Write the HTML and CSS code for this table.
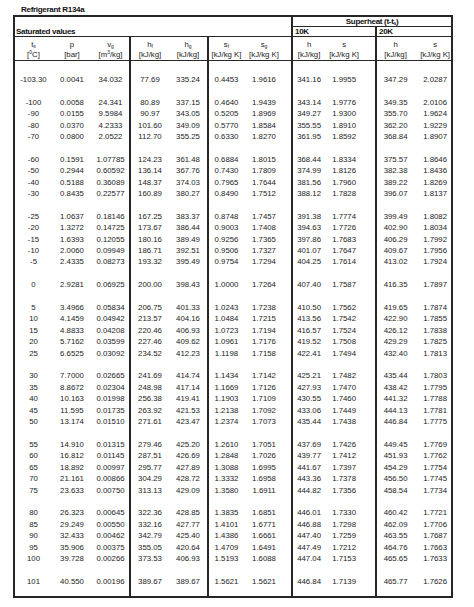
FILE: index.html
```html
<!DOCTYPE html>
<html lang="en">
<head>
<meta charset="utf-8">
<title>Refrigerant R134a</title>
<link rel="stylesheet" href="styles.css">
</head>
<body>
<div class="title">Refrigerant R134a</div>
<table class="tbl">
<colgroup>
<col class="w37"><col class="w40"><col class="w37"><col class="w40"><col class="w38"><col class="w37"><col class="w47"><col class="w34"><col class="w50"><col class="w39"><col class="w37">
</colgroup>
<thead>
<tr class="r1"><th class="sat" colspan="7" rowspan="2">Saturated values</th><th class="sh" colspan="4">Superheat (t-t<sub>s</sub>)</th></tr>
<tr class="r2"><th class="k" colspan="2">10K</th><th class="k k2" colspan="2">20K</th></tr>
<tr class="r3">
<th>t<sub>s</sub><br>[<sup>0</sup>C]</th>
<th>p<br>[bar]</th>
<th>v<sub>g</sub><br>[m<sup>3</sup>/kg]</th>
<th>h<sub>f</sub><br>[kJ/kg]</th>
<th>h<sub>g</sub><br>[kJ/kg]</th>
<th>s<sub>f</sub><br>[kJ/kg K]</th>
<th class="pr7">s<sub>g</sub><br>[kJ/kg K]</th>
<th>h<br>[kJ/kg]</th>
<th class="pr12">s<br>[kJ/kg K]</th>
<th>h<br>[kJ/kg]</th>
<th class="pl5">s<br>[kJ/kg K]</th>
</tr>
</thead>
<tbody>
<tr class="top"><td></td><td></td><td></td><td></td><td></td><td></td><td></td><td></td><td></td><td></td><td></td></tr>
<tr><td>-103.30</td><td>0.0041</td><td>34.032</td><td>77.69</td><td>335.24</td><td>0.4453</td><td>1.9616</td><td>341.16</td><td>1.9955</td><td>347.29</td><td>2.0287</td></tr>
<tr><td></td><td></td><td></td><td></td><td></td><td></td><td></td><td></td><td></td><td></td><td></td></tr>
<tr><td>-100</td><td>0.0058</td><td>24.341</td><td>80.89</td><td>337.15</td><td>0.4640</td><td>1.9439</td><td>343.14</td><td>1.9776</td><td>349.35</td><td>2.0106</td></tr>
<tr><td>-90</td><td>0.0155</td><td>9.5984</td><td>90.97</td><td>343.05</td><td>0.5205</td><td>1.8969</td><td>349.27</td><td>1.9300</td><td>355.70</td><td>1.9624</td></tr>
<tr><td>-80</td><td>0.0370</td><td>4.2333</td><td>101.60</td><td>349.09</td><td>0.5770</td><td>1.8584</td><td>355.55</td><td>1.8910</td><td>362.20</td><td>1.9229</td></tr>
<tr><td>-70</td><td>0.0800</td><td>2.0522</td><td>112.70</td><td>355.25</td><td>0.6330</td><td>1.8270</td><td>361.95</td><td>1.8592</td><td>368.84</td><td>1.8907</td></tr>
<tr><td></td><td></td><td></td><td></td><td></td><td></td><td></td><td></td><td></td><td></td><td></td></tr>
<tr><td>-60</td><td>0.1591</td><td>1.07785</td><td>124.23</td><td>361.48</td><td>0.6884</td><td>1.8015</td><td>368.44</td><td>1.8334</td><td>375.57</td><td>1.8646</td></tr>
<tr><td>-50</td><td>0.2944</td><td>0.60592</td><td>136.14</td><td>367.76</td><td>0.7430</td><td>1.7809</td><td>374.99</td><td>1.8126</td><td>382.38</td><td>1.8436</td></tr>
<tr><td>-40</td><td>0.5188</td><td>0.36089</td><td>148.37</td><td>374.03</td><td>0.7965</td><td>1.7644</td><td>381.56</td><td>1.7960</td><td>389.22</td><td>1.8269</td></tr>
<tr><td>-30</td><td>0.8435</td><td>0.22577</td><td>160.89</td><td>380.27</td><td>0.8490</td><td>1.7512</td><td>388.12</td><td>1.7828</td><td>396.07</td><td>1.8137</td></tr>
<tr><td></td><td></td><td></td><td></td><td></td><td></td><td></td><td></td><td></td><td></td><td></td></tr>
<tr><td>-25</td><td>1.0637</td><td>0.18146</td><td>167.25</td><td>383.37</td><td>0.8748</td><td>1.7457</td><td>391.38</td><td>1.7774</td><td>399.49</td><td>1.8082</td></tr>
<tr><td>-20</td><td>1.3272</td><td>0.14725</td><td>173.67</td><td>386.44</td><td>0.9003</td><td>1.7408</td><td>394.63</td><td>1.7726</td><td>402.90</td><td>1.8034</td></tr>
<tr><td>-15</td><td>1.6393</td><td>0.12055</td><td>180.16</td><td>389.49</td><td>0.9256</td><td>1.7365</td><td>397.86</td><td>1.7683</td><td>406.29</td><td>1.7992</td></tr>
<tr><td>-10</td><td>2.0060</td><td>0.09949</td><td>186.71</td><td>392.51</td><td>0.9506</td><td>1.7327</td><td>401.07</td><td>1.7647</td><td>409.67</td><td>1.7956</td></tr>
<tr><td>-5</td><td>2.4335</td><td>0.08273</td><td>193.32</td><td>395.49</td><td>0.9754</td><td>1.7294</td><td>404.25</td><td>1.7614</td><td>413.02</td><td>1.7924</td></tr>
<tr><td></td><td></td><td></td><td></td><td></td><td></td><td></td><td></td><td></td><td></td><td></td></tr>
<tr><td>0</td><td>2.9281</td><td>0.06925</td><td>200.00</td><td>398.43</td><td>1.0000</td><td>1.7264</td><td>407.40</td><td>1.7587</td><td>416.35</td><td>1.7897</td></tr>
<tr><td></td><td></td><td></td><td></td><td></td><td></td><td></td><td></td><td></td><td></td><td></td></tr>
<tr><td>5</td><td>3.4966</td><td>0.05834</td><td>206.75</td><td>401.33</td><td>1.0243</td><td>1.7238</td><td>410.50</td><td>1.7562</td><td>419.65</td><td>1.7874</td></tr>
<tr><td>10</td><td>4.1459</td><td>0.04942</td><td>213.57</td><td>404.16</td><td>1.0484</td><td>1.7215</td><td>413.56</td><td>1.7542</td><td>422.90</td><td>1.7855</td></tr>
<tr><td>15</td><td>4.8833</td><td>0.04208</td><td>220.46</td><td>406.93</td><td>1.0723</td><td>1.7194</td><td>416.57</td><td>1.7524</td><td>426.12</td><td>1.7838</td></tr>
<tr><td>20</td><td>5.7162</td><td>0.03599</td><td>227.46</td><td>409.62</td><td>1.0961</td><td>1.7176</td><td>419.52</td><td>1.7508</td><td>429.29</td><td>1.7825</td></tr>
<tr><td>25</td><td>6.6525</td><td>0.03092</td><td>234.52</td><td>412.23</td><td>1.1198</td><td>1.7158</td><td>422.41</td><td>1.7494</td><td>432.40</td><td>1.7813</td></tr>
<tr><td></td><td></td><td></td><td></td><td></td><td></td><td></td><td></td><td></td><td></td><td></td></tr>
<tr><td>30</td><td>7.7000</td><td>0.02665</td><td>241.69</td><td>414.74</td><td>1.1434</td><td>1.7142</td><td>425.21</td><td>1.7482</td><td>435.44</td><td>1.7803</td></tr>
<tr><td>35</td><td>8.8672</td><td>0.02304</td><td>248.98</td><td>417.14</td><td>1.1669</td><td>1.7126</td><td>427.93</td><td>1.7470</td><td>438.42</td><td>1.7795</td></tr>
<tr><td>40</td><td>10.163</td><td>0.01998</td><td>256.38</td><td>419.41</td><td>1.1903</td><td>1.7109</td><td>430.55</td><td>1.7460</td><td>441.32</td><td>1.7788</td></tr>
<tr><td>45</td><td>11.595</td><td>0.01735</td><td>263.92</td><td>421.53</td><td>1.2138</td><td>1.7092</td><td>433.06</td><td>1.7449</td><td>444.13</td><td>1.7781</td></tr>
<tr><td>50</td><td>13.174</td><td>0.01510</td><td>271.61</td><td>423.47</td><td>1.2374</td><td>1.7073</td><td>435.44</td><td>1.7438</td><td>446.84</td><td>1.7775</td></tr>
<tr><td></td><td></td><td></td><td></td><td></td><td></td><td></td><td></td><td></td><td></td><td></td></tr>
<tr><td>55</td><td>14.910</td><td>0.01315</td><td>279.46</td><td>425.20</td><td>1.2610</td><td>1.7051</td><td>437.69</td><td>1.7426</td><td>449.45</td><td>1.7769</td></tr>
<tr><td>60</td><td>16.812</td><td>0.01145</td><td>287.51</td><td>426.69</td><td>1.2848</td><td>1.7026</td><td>439.77</td><td>1.7412</td><td>451.93</td><td>1.7762</td></tr>
<tr><td>65</td><td>18.892</td><td>0.00997</td><td>295.77</td><td>427.89</td><td>1.3088</td><td>1.6995</td><td>441.67</td><td>1.7397</td><td>454.29</td><td>1.7754</td></tr>
<tr><td>70</td><td>21.161</td><td>0.00866</td><td>304.29</td><td>428.72</td><td>1.3332</td><td>1.6958</td><td>443.36</td><td>1.7378</td><td>456.50</td><td>1.7745</td></tr>
<tr><td>75</td><td>23.633</td><td>0.00750</td><td>313.13</td><td>429.09</td><td>1.3580</td><td>1.6911</td><td>444.82</td><td>1.7356</td><td>458.54</td><td>1.7734</td></tr>
<tr><td></td><td></td><td></td><td></td><td></td><td></td><td></td><td></td><td></td><td></td><td></td></tr>
<tr><td>80</td><td>26.323</td><td>0.00645</td><td>322.36</td><td>428.85</td><td>1.3835</td><td>1.6851</td><td>446.01</td><td>1.7330</td><td>460.42</td><td>1.7721</td></tr>
<tr><td>85</td><td>29.249</td><td>0.00550</td><td>332.16</td><td>427.77</td><td>1.4101</td><td>1.6771</td><td>446.88</td><td>1.7298</td><td>462.09</td><td>1.7706</td></tr>
<tr><td>90</td><td>32.433</td><td>0.00462</td><td>342.79</td><td>425.40</td><td>1.4386</td><td>1.6661</td><td>447.40</td><td>1.7259</td><td>463.55</td><td>1.7687</td></tr>
<tr><td>95</td><td>35.906</td><td>0.00375</td><td>355.05</td><td>420.64</td><td>1.4709</td><td>1.6491</td><td>447.49</td><td>1.7212</td><td>464.76</td><td>1.7663</td></tr>
<tr><td>100</td><td>39.728</td><td>0.00266</td><td>373.53</td><td>406.93</td><td>1.5193</td><td>1.6088</td><td>447.04</td><td>1.7153</td><td>465.65</td><td>1.7633</td></tr>
<tr><td></td><td></td><td></td><td></td><td></td><td></td><td></td><td></td><td></td><td></td><td></td></tr>
<tr><td>101</td><td>40.550</td><td>0.00196</td><td>389.67</td><td>389.67</td><td>1.5621</td><td>1.5621</td><td>446.84</td><td>1.7139</td><td>465.77</td><td>1.7626</td></tr>
<tr class="bot"><td></td><td></td><td></td><td></td><td></td><td></td><td></td><td></td><td></td><td></td><td></td></tr>
</tbody>
</table>
</body>
</html>
```
FILE: styles.css
```css
html, body {
  margin: 0;
  padding: 0;
  background: #ffffff;
}
body {
  font-family: "Liberation Sans", Arial, sans-serif;
  color: #1c1c1c;
  width: 474px;
  height: 607px;
  overflow: hidden;
}
.title {
  margin: 5px 0 0 21px;
  height: 10px;
  line-height: 10px;
  font-size: 8px;
  font-weight: bold;
  letter-spacing: -0.3px;
  color: #111111;
}
.tbl {
  margin-left: 13px;
  width: 440px;
  table-layout: fixed;
  border-collapse: separate;
  border-spacing: 0;
  border: 2px solid #262626;
  font-size: 7.8px;
}
.w37 { width: 37px; }
.w40 { width: 40px; }
.w38 { width: 38px; }
.w47 { width: 47px; }
.w34 { width: 34px; }
.w50 { width: 50px; }
.w39 { width: 39px; }
.tbl th,
.tbl td {
  padding: 0;
  box-sizing: border-box;
  font-weight: normal;
  text-align: center;
  white-space: nowrap;
}
.tbl sub {
  font-size: 5px;
  vertical-align: -1px;
  line-height: 0;
}
.tbl sup {
  font-size: 5px;
  vertical-align: 3px;
  line-height: 0;
}
.r1 th { height: 10px; line-height: 9px; }
.r2 th { height: 10px; line-height: 9px; }
.sat {
  text-align: left !important;
  vertical-align: bottom;
  padding-left: 1px !important;
  font-weight: bold !important;
  letter-spacing: -0.3px;
  font-size: 8px;
  color: #111111;
  border-bottom: 1px solid #262626;
}
.sh {
  font-weight: bold !important;
  letter-spacing: -0.3px;
  font-size: 8px;
  color: #111111;
  border-left: 2px solid #262626;
  border-bottom: 1px solid #262626;
}
.sh sub { font-size: 5px; }
.k {
  text-align: left !important;
  padding-left: 2px !important;
  font-weight: bold !important;
  letter-spacing: -0.4px;
  font-size: 8px;
  color: #111111;
  border-bottom: 1px solid #262626;
}
.k2,
.k:first-child { border-left: 2px solid #262626; }
.r3 th {
  height: 24px;
  vertical-align: top;
  padding-top: 3px;
  line-height: 10px;
  border-bottom: 1px solid #262626;
}
.r3 th:nth-child(4),
.r3 th:nth-child(6),
.r3 th:nth-child(8),
.r3 th:nth-child(10),
.tbl tbody td:nth-child(4),
.tbl tbody td:nth-child(6),
.tbl tbody td:nth-child(8),
.tbl tbody td:nth-child(10) {
  border-left: 2px solid #262626;
}
.tbl .pr7 { padding-right: 7px; }
.tbl .pr12 { padding-right: 12px; }
.tbl .pl5 { padding-left: 5px; }
.tbl tbody td:nth-child(7) { padding-right: 7px; }
.tbl tbody td:nth-child(9) { padding-right: 12px; }
.tbl tbody td:nth-child(11) { padding-left: 5px; }
.tbl tbody td {
  height: 11.4px;
  line-height: 11.4px;
}
.tbl tbody tr.top td { height: 13px; }
.tbl tbody tr.bot td { height: 9px; }
```
